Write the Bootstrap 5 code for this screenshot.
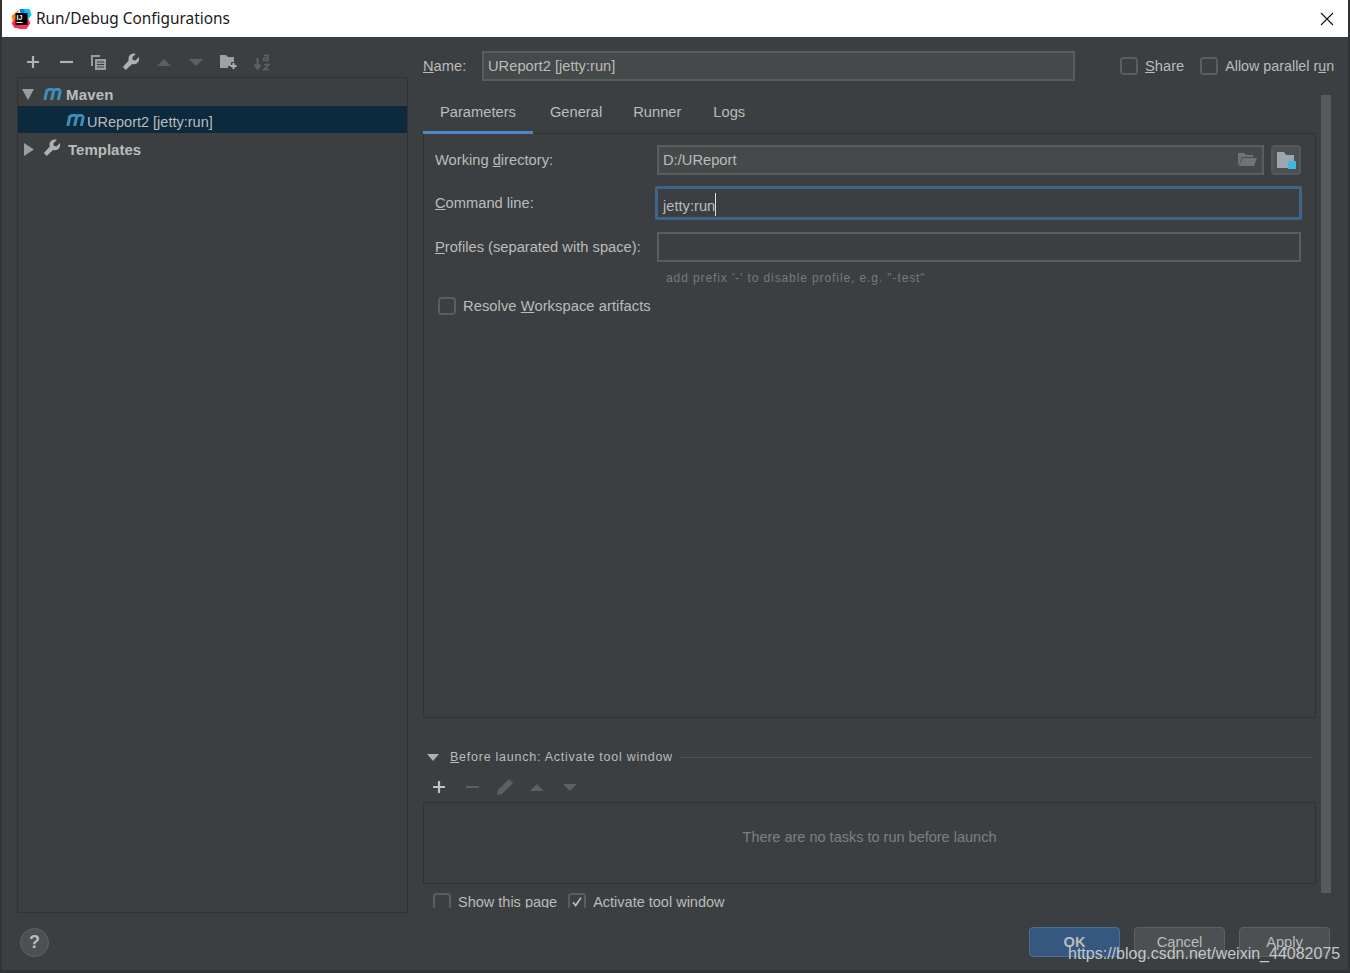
<!DOCTYPE html>
<html lang="en">
<head>
<meta charset="utf-8">
<title>Run/Debug Configurations</title>
<link rel="stylesheet" href="https://cdn.jsdelivr.net/npm/bootstrap@5.3.0/dist/css/bootstrap.min.css">
<style>
html,body{height:100%;overflow:hidden}
body{background:#303234;font-family:"Liberation Sans",Arial,sans-serif;font-size:14.7px;color:#bbb;line-height:18px}
.win{position:relative;margin-left:2px;width:1346px;height:970px;background:#3c3f41}
.titlebar{height:37px;background:#fff;color:#1a1a1a;font-family:"Noto Sans",sans-serif;font-size:15.4px;padding-left:9px;gap:4px}
.closex{margin-left:auto;margin-right:14px}
.mainrow{height:875px}
.leftcol{width:391px;flex:none;margin-left:15px;margin-right:15px}
.bar{height:26px;margin-top:12px;margin-left:-.5px}
.cell{width:32.7px;height:26px;flex:none}
.tree{height:836px;margin-top:2px;border:1px solid #323232;padding-top:3px}
.trow{height:25px;font-weight:700;font-size:15px;padding-left:4px;gap:9px}
.trow.sel{height:27px;background:#0d293e;font-weight:400;font-size:14.5px;padding-left:48px;gap:2px}
.trow.t3{height:33px;padding-left:5px;gap:9px}
.mtxt{margin-left:-5px;margin-top:2px;letter-spacing:.2px}
.seltxt{margin-top:4px}
.ttxt{margin-left:-2px}
.wrup{margin-top:-4px}
.rightcol{width:925px;flex:none}
.namerow{margin-top:14px;height:30px;width:915px;white-space:nowrap}
.namelab{width:59px;flex:none}
.fc{background:#45494a;border:2px solid #5a5d5e;border-radius:0;color:#bbb;font-size:14.7px;line-height:18px;padding:4px 4px;height:30px;box-shadow:none}
.namefield{width:593px;flex:none}
.chk{width:18px;height:18px;margin:0;flex:none;background-color:#3c3f41;border:2px solid #5a5d5e;border-radius:3px}
.chk:checked{background-color:#3c3f41;border-color:#5a5d5e;background-image:url("data:image/svg+xml,%3Csvg xmlns='http://www.w3.org/2000/svg' viewBox='0 0 16 16'%3E%3Cpath d='M3.5 8.5l3 3.5 6-9' fill='none' stroke='%23bbb' stroke-width='2'/%3E%3C/svg%3E")}
.sharewrap{margin-left:45px;gap:7px;flex:none}
.parwrap{margin-left:16px;gap:7px;flex:none;font-size:14.3px}
.body2{margin-top:14px;height:813px}
.content{width:893px;flex:none;height:813px;overflow:hidden}
.sb{width:10px;flex:none;height:798px;margin-left:5px;background:#585a5c}
.tabbar{height:39px;border-bottom:1px solid #323232}
.tabitem{color:#bbb;padding:8px 16px 0;height:39px;border-bottom:3px solid transparent}
.tabitem.first{padding:8px 17px 0 17px;border-bottom-color:#4a88c7}
.tabitem.second{padding:8px 14px 0 17px}
.tabitem.third{padding:8px 16px 0 17px}
.panel{height:584px;border:1px solid #323232;border-top:0;padding:11px 0 0 11px}
.frow{display:flex;align-items:center;height:30px}
.flab{width:222px;flex:none}
.dirfield{width:607px;flex:none;position:relative}
.infold{position:absolute;right:5px;top:4px}
.browse{width:30px;height:30px;margin-left:7px;padding:0;background:#4c5052;border:2px solid #54585a;border-radius:4px}
.cmdrow{height:34px;margin-top:11px;margin-bottom:12px}
.cmdfield{width:647px;height:34px;margin-left:-2px;flex:none;background:#3c3f41;border:3px solid #3f6389;border-radius:2px;padding:4px 5px 4px;color:#bbb;font-size:14.7px;line-height:22px}
.caret{display:inline-block;width:1px;height:23px;background:#ddd;vertical-align:-5px}
.proffield{width:644px;flex:none;background:#3c3f41}
.hintline{margin-left:231px;margin-top:8px;height:16px;font-size:12px;line-height:16px;letter-spacing:.9px;color:#777a7c}
.resrow{margin-top:11px;margin-left:3px;gap:7px;letter-spacing:.07px}
.blhead{margin-top:30px;height:18px;padding-left:4px;gap:11px;font-size:12.5px;letter-spacing:.75px;color:#bbb}
.blline{height:1px;background:#515151;flex:1;margin-right:4px;margin-left:-4px}
.bar2{margin-top:8px;margin-left:0}
.taskbox{height:82px;margin-top:2px;border:1px solid #323232;color:#7c7f81;padding-bottom:12px;font-size:14.5px}
.lastrow{height:15px;margin-top:9px;overflow:hidden;padding-left:10px;align-items:flex-start;font-size:14.5px}
.lastrow .chk{margin-right:7px}
.lastrow .gapr{margin-right:11px}
.foot{margin-top:15px;height:30px;padding:0 18px;justify-content:space-between}
.helpb{width:29px;height:29px;border-radius:50%;background:#4c5052;border:1px solid #5f6365;color:#bbb;font-weight:700;font-size:18px;padding:0;line-height:26px}
.btnset{gap:14px}
.dbtn{width:91px;height:30px;padding:0;font-size:14.7px;line-height:26px;border-radius:4px;background:#4c5052;border:1px solid #5e6060;color:#bbb}
.dbtn.okb{background:#365880;border-color:#4c708c;font-weight:700}
.wmark{position:absolute;left:1066px;top:944px;font-size:16px;line-height:20px;color:#c3c7ca;white-space:nowrap;pointer-events:none}
</style>
</head>
<body>
<div class="win">
  <div class="titlebar d-flex align-items-center">
    <svg width="21" height="20" viewBox="0 0 20 20"><path d="M0 7 7 1v7L2 15z" fill="#fc801d"/><path d="M0 14l6-6 4 11H3z" fill="#fe2857"/><path d="M8 0h8l3 3-3 9-6-3z" fill="#087cfa"/><path d="M12 0h6l2 6-4 5z" fill="#07c3f2"/><path d="M8 13l8-4 3 5-4 6H7z" fill="#fe315d"/><rect x="4" y="4" width="12" height="12" fill="#000"/><text x="5" y="11" font-family="Liberation Sans" font-size="7" font-weight="700" fill="#fff">IJ</text><rect x="5" y="13" width="6" height="1" fill="#fff"/></svg>
    <span>Run/Debug Configurations</span>
    <svg class="closex" width="14" height="14" viewBox="0 0 14 14"><path d="M1 1l12 12M13 1 1 13" stroke="#111" stroke-width="1.1" fill="none"/></svg>
  </div>
  <div class="mainrow d-flex">
    <div class="leftcol">
      <div class="bar d-flex">
        <div class="cell d-flex align-items-center justify-content-center"><svg width="14" height="14" viewBox="0 0 14 14"><path d="M7 1v12M1 7h12" stroke="#afb1b3" stroke-width="2.200"/></svg></div>
        <div class="cell d-flex align-items-center justify-content-center"><svg width="14" height="14" viewBox="0 0 14 14"><path d="M1 7h13" stroke="#afb1b3" stroke-width="2.200"/></svg></div>
        <div class="cell d-flex align-items-center justify-content-center"><svg width="17" height="17" viewBox="0 0 17 17"><path d="M1 1h9v2H3v9H1z" fill="#9a9c9e"/><path d="M5 5h11v11H5z" fill="#9a9c9e"/><path d="M7 8h7M7 10.5h7M7 13h7" stroke="#3c3f41"/></svg></div>
        <div class="cell d-flex align-items-center justify-content-center"><svg width="18" height="18" viewBox="0 0 16 16"><path d="M15 3.600 12 6.600 9.600 6.200 9.200 3.800 12.200.9C10.200.1 8 .6 6.700 2.300 5.700 3.700 5.500 5.200 6 6.600L.8 12.400 3.300 15 9 9.800c1.500.5 3 .3 4.400-.7C15.100 7.800 15.700 5.600 15 3.600Z" fill="#afb1b3"/></svg></div>
        <div class="cell d-flex align-items-center justify-content-center"><svg width="16" height="9" viewBox="0 0 16 9"><path d="M8 1l7 7H1z" fill="#5d5f61"/></svg></div>
        <div class="cell d-flex align-items-center justify-content-center"><svg width="16" height="9" viewBox="0 0 16 9"><path d="M1 1h14L8 8z" fill="#5d5f61"/></svg></div>
        <div class="cell d-flex align-items-center justify-content-center"><svg width="18" height="16" viewBox="0 0 18 16"><path d="M0 1h6l2 2h6v5h-3v4H8v2H0z" fill="#9fa1a3"/><path d="M13.500 9v6M10.500 12h6" stroke="#afb1b3" stroke-width="2"/></svg></div>
        <div class="cell d-flex align-items-center justify-content-center"><svg width="17" height="17" viewBox="0 0 17 17"><path d="M4.500 4v10M1.500 10.500l3 4 3-4" fill="none" stroke="#5f6163" stroke-width="2"/><path d="M11 1.500h4v5h-3.500a1.200 1.200 0 0 1 0-2.500H15M11 10.500h5l-5 5h5" fill="none" stroke="#5f6163" stroke-width="1.500"/></svg></div>
      </div>
      <div class="tree">
        <div class="trow d-flex align-items-center">
          <svg width="12" height="12" viewBox="0 0 12 12"><path d="M0 1h12L6 12z" fill="#9a9c9e"/></svg>
          <svg width="19" height="12" viewBox="0 0 19 12"><path d="M1.800 12 4 1.500M3.800 3C6 .5 10.800.6 10.500 3.500L8.600 12M10.400 3C12.500.5 17.500.6 17.100 4L15.300 12" fill="none" stroke="#3d8fb8" stroke-width="3"/></svg>
          <span class="mtxt">Maven</span>
        </div>
        <div class="trow sel d-flex align-items-center">
          <svg width="19" height="12" viewBox="0 0 19 12"><path d="M1.800 12 4 1.500M3.800 3C6 .5 10.800.6 10.500 3.500L8.600 12M10.400 3C12.500.5 17.500.6 17.100 4L15.300 12" fill="none" stroke="#3d8fb8" stroke-width="3"/></svg>
          <span class="seltxt">UReport2 [jetty:run]</span>
        </div>
        <div class="trow t3 d-flex align-items-center">
          <svg width="11" height="13" viewBox="0 0 11 13"><path d="M1 0l10 6.500L1 13z" fill="#9a9c9e"/></svg>
          <svg class="wrup" width="18" height="18" viewBox="0 0 16 16"><path d="M15 3.600 12 6.600 9.600 6.200 9.200 3.800 12.200.9C10.200.1 8 .6 6.700 2.300 5.700 3.700 5.500 5.200 6 6.600L.8 12.400 3.300 15 9 9.800c1.500.5 3 .3 4.400-.7C15.100 7.800 15.700 5.600 15 3.600Z" fill="#afb1b3"/></svg>
          <span class="ttxt">Templates</span>
        </div>
      </div>
    </div>
    <div class="rightcol">
      <div class="namerow d-flex align-items-center">
        <div class="namelab"><u>N</u>ame:</div>
        <div class="form-control fc namefield">UReport2 [jetty:run]</div>
        <div class="sharewrap d-flex align-items-center"><input class="form-check-input chk" type="checkbox"><span><u>S</u>hare</span></div>
        <div class="parwrap d-flex align-items-center"><input class="form-check-input chk" type="checkbox"><span>Allow parallel r<u>u</u>n</span></div>
      </div>
      <div class="body2 d-flex">
        <div class="content">
          <div class="tabbar d-flex">
            <div class="tabitem first">Parameters</div>
            <div class="tabitem second">General</div>
            <div class="tabitem third">Runner</div>
            <div class="tabitem">Logs</div>
          </div>
          <div class="panel">
            <div class="frow">
              <div class="flab">Working <u>d</u>irectory:</div>
              <div class="form-control fc dirfield">D:/UReport
                <svg class="infold" width="20" height="16" viewBox="0 0 20 16"><path d="M1 2h6l2 2h7v2H5L2 14H1z" fill="#6e7476"/><path d="M5.500 7H20l-3 8H2z" fill="#6e7476"/></svg>
              </div>
              <button class="btn browse d-flex align-items-center justify-content-center" type="button"><svg width="20" height="18" viewBox="0 0 20 18"><path d="M1 1h7l2 3h8v6h-5v7H1z" fill="#9aa7b0"/><rect x="12" y="10" width="8" height="8" fill="#40b6e0"/></svg></button>
            </div>
            <div class="frow cmdrow">
              <div class="flab"><u>C</u>ommand line:</div>
              <div class="cmdfield">jetty:run<span class="caret"></span></div>
            </div>
            <div class="frow">
              <div class="flab"><u>P</u>rofiles (separated with space):</div>
              <div class="form-control fc proffield"></div>
            </div>
            <div class="hintline">add prefix '-' to disable profile, e.g. "-test"</div>
            <div class="resrow d-flex align-items-center"><input class="form-check-input chk" type="checkbox"><span>Resolve <u>W</u>orkspace artifacts</span></div>
          </div>
          <div class="blhead d-flex align-items-center">
            <svg width="12" height="7" viewBox="0 0 12 7"><path d="M0 0h12L6 7z" fill="#afb1b3"/></svg>
            <span><u>B</u>efore launch: Activate tool window</span>
            <div class="blline"></div>
          </div>
          <div class="bar bar2 d-flex">
            <div class="cell d-flex align-items-center justify-content-center"><svg width="14" height="14" viewBox="0 0 14 14"><path d="M7 1v12M1 7h12" stroke="#bfc1c3" stroke-width="2.200"/></svg></div>
            <div class="cell d-flex align-items-center justify-content-center"><svg width="14" height="14" viewBox="0 0 14 14"><path d="M1 7h13" stroke="#5d5f61" stroke-width="2"/></svg></div>
            <div class="cell d-flex align-items-center justify-content-center"><svg width="18" height="18" viewBox="0 0 18 18"><path d="M1 17l1-5L12 2l4 4L6 16z" fill="#5d5f61"/><path d="M13 1l4 4-1 1-4-4z" fill="#5d5f61"/></svg></div>
            <div class="cell d-flex align-items-center justify-content-center"><svg width="16" height="9" viewBox="0 0 16 9"><path d="M8 1l7 7H1z" fill="#5d5f61"/></svg></div>
            <div class="cell d-flex align-items-center justify-content-center"><svg width="16" height="9" viewBox="0 0 16 9"><path d="M1 1h14L8 8z" fill="#5d5f61"/></svg></div>
          </div>
          <div class="taskbox d-flex align-items-center justify-content-center">There are no tasks to run before launch</div>
          <div class="lastrow d-flex">
            <input class="form-check-input chk" type="checkbox"><span class="gapr">Show this page</span>
            <input class="form-check-input chk" type="checkbox" checked><span>Activate tool window</span>
          </div>
        </div>
        <div class="sb"></div>
      </div>
    </div>
  </div>
  <div class="foot d-flex align-items-center">
    <button class="btn helpb" type="button">?</button>
    <div class="d-flex btnset">
      <button class="btn dbtn okb" type="button">OK</button>
      <button class="btn dbtn" type="button">Cancel</button>
      <button class="btn dbtn" type="button">Apply</button>
    </div>
  </div>
  <div class="wmark">https://blog.csdn.net/weixin_44082075</div>
</div>
<script src="https://cdn.jsdelivr.net/npm/bootstrap@5.3.0/dist/js/bootstrap.bundle.min.js"></script>
</body>
</html>
